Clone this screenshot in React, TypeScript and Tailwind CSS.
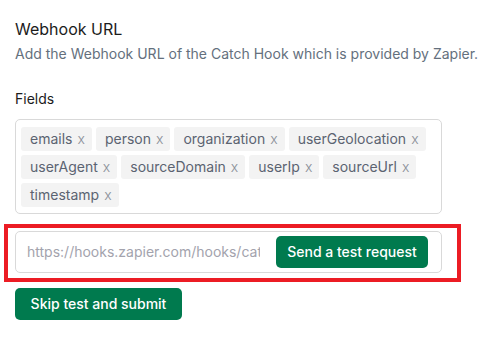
const fields = [
  "emails",
  "person",
  "organization",
  "userGeolocation",
  "userAgent",
  "sourceDomain",
  "userIp",
  "sourceUrl",
  "timestamp",
];

function Tag({ label }: { label: string }) {
  return (
    <span className="flex h-6 items-center gap-[5px] rounded-[3px] bg-[#f3f3f3] pl-[9px] pr-[7px] text-sm text-[#5b6371]">
      {label}
      <span className="text-[14px] font-light leading-none text-[#8a8f98]">x</span>
    </span>
  );
}

export default function App() {
  return (
    <div
      className="relative min-h-[337px] w-[492px] overflow-hidden bg-white px-[15px] pt-[17px]"
      style={{ fontFamily: "Inter, 'Noto Sans', sans-serif" }}
    >
      <h2 className="text-base leading-6 text-[#1c1c1c]">Webhook URL</h2>
      <p className="mt-[3px] whitespace-nowrap text-sm leading-5 text-[#64707d]">
        Add the Webhook URL of the Catch Hook which is provided by Zapier.
      </p>

      <div className="mt-[25px] text-sm leading-5 text-[#1c1c1c]">Fields</div>
      <div className="mt-[10px] flex w-[427px] flex-wrap gap-1 rounded-[5px] border border-[#d9d9d9] pb-[6px] pl-[5px] pr-[5px] pt-[7px]">
        {fields.map((f) => (
          <Tag key={f} label={f} />
        ))}
      </div>

      <div className="mt-[17px] flex h-[42px] w-[427px] items-center rounded-[5px] border border-[#d9d9d9] pl-[11px] pr-[13px]">
        <input
          className="w-[233px] bg-transparent text-sm text-[#a3a3ad] outline-none placeholder:text-[#a3a3ad]"
          placeholder="https://hooks.zapier.com/hooks/catch/"
        />
        <button className="ml-auto h-8 w-[152px] rounded-[5px] bg-[#007a4e] text-sm font-medium text-white">
          Send a test request
        </button>
      </div>

      <button className="mt-[15px] h-8 w-[167px] rounded-[5px] bg-[#007a4e] text-sm font-medium text-white">
        Skip test and submit
      </button>

      {/* annotation box round the url row */}
      <div className="pointer-events-none absolute left-[4px] top-[224px] h-[58px] w-[457px] border-4 border-[#ec1c24]" />
    </div>
  );
}
